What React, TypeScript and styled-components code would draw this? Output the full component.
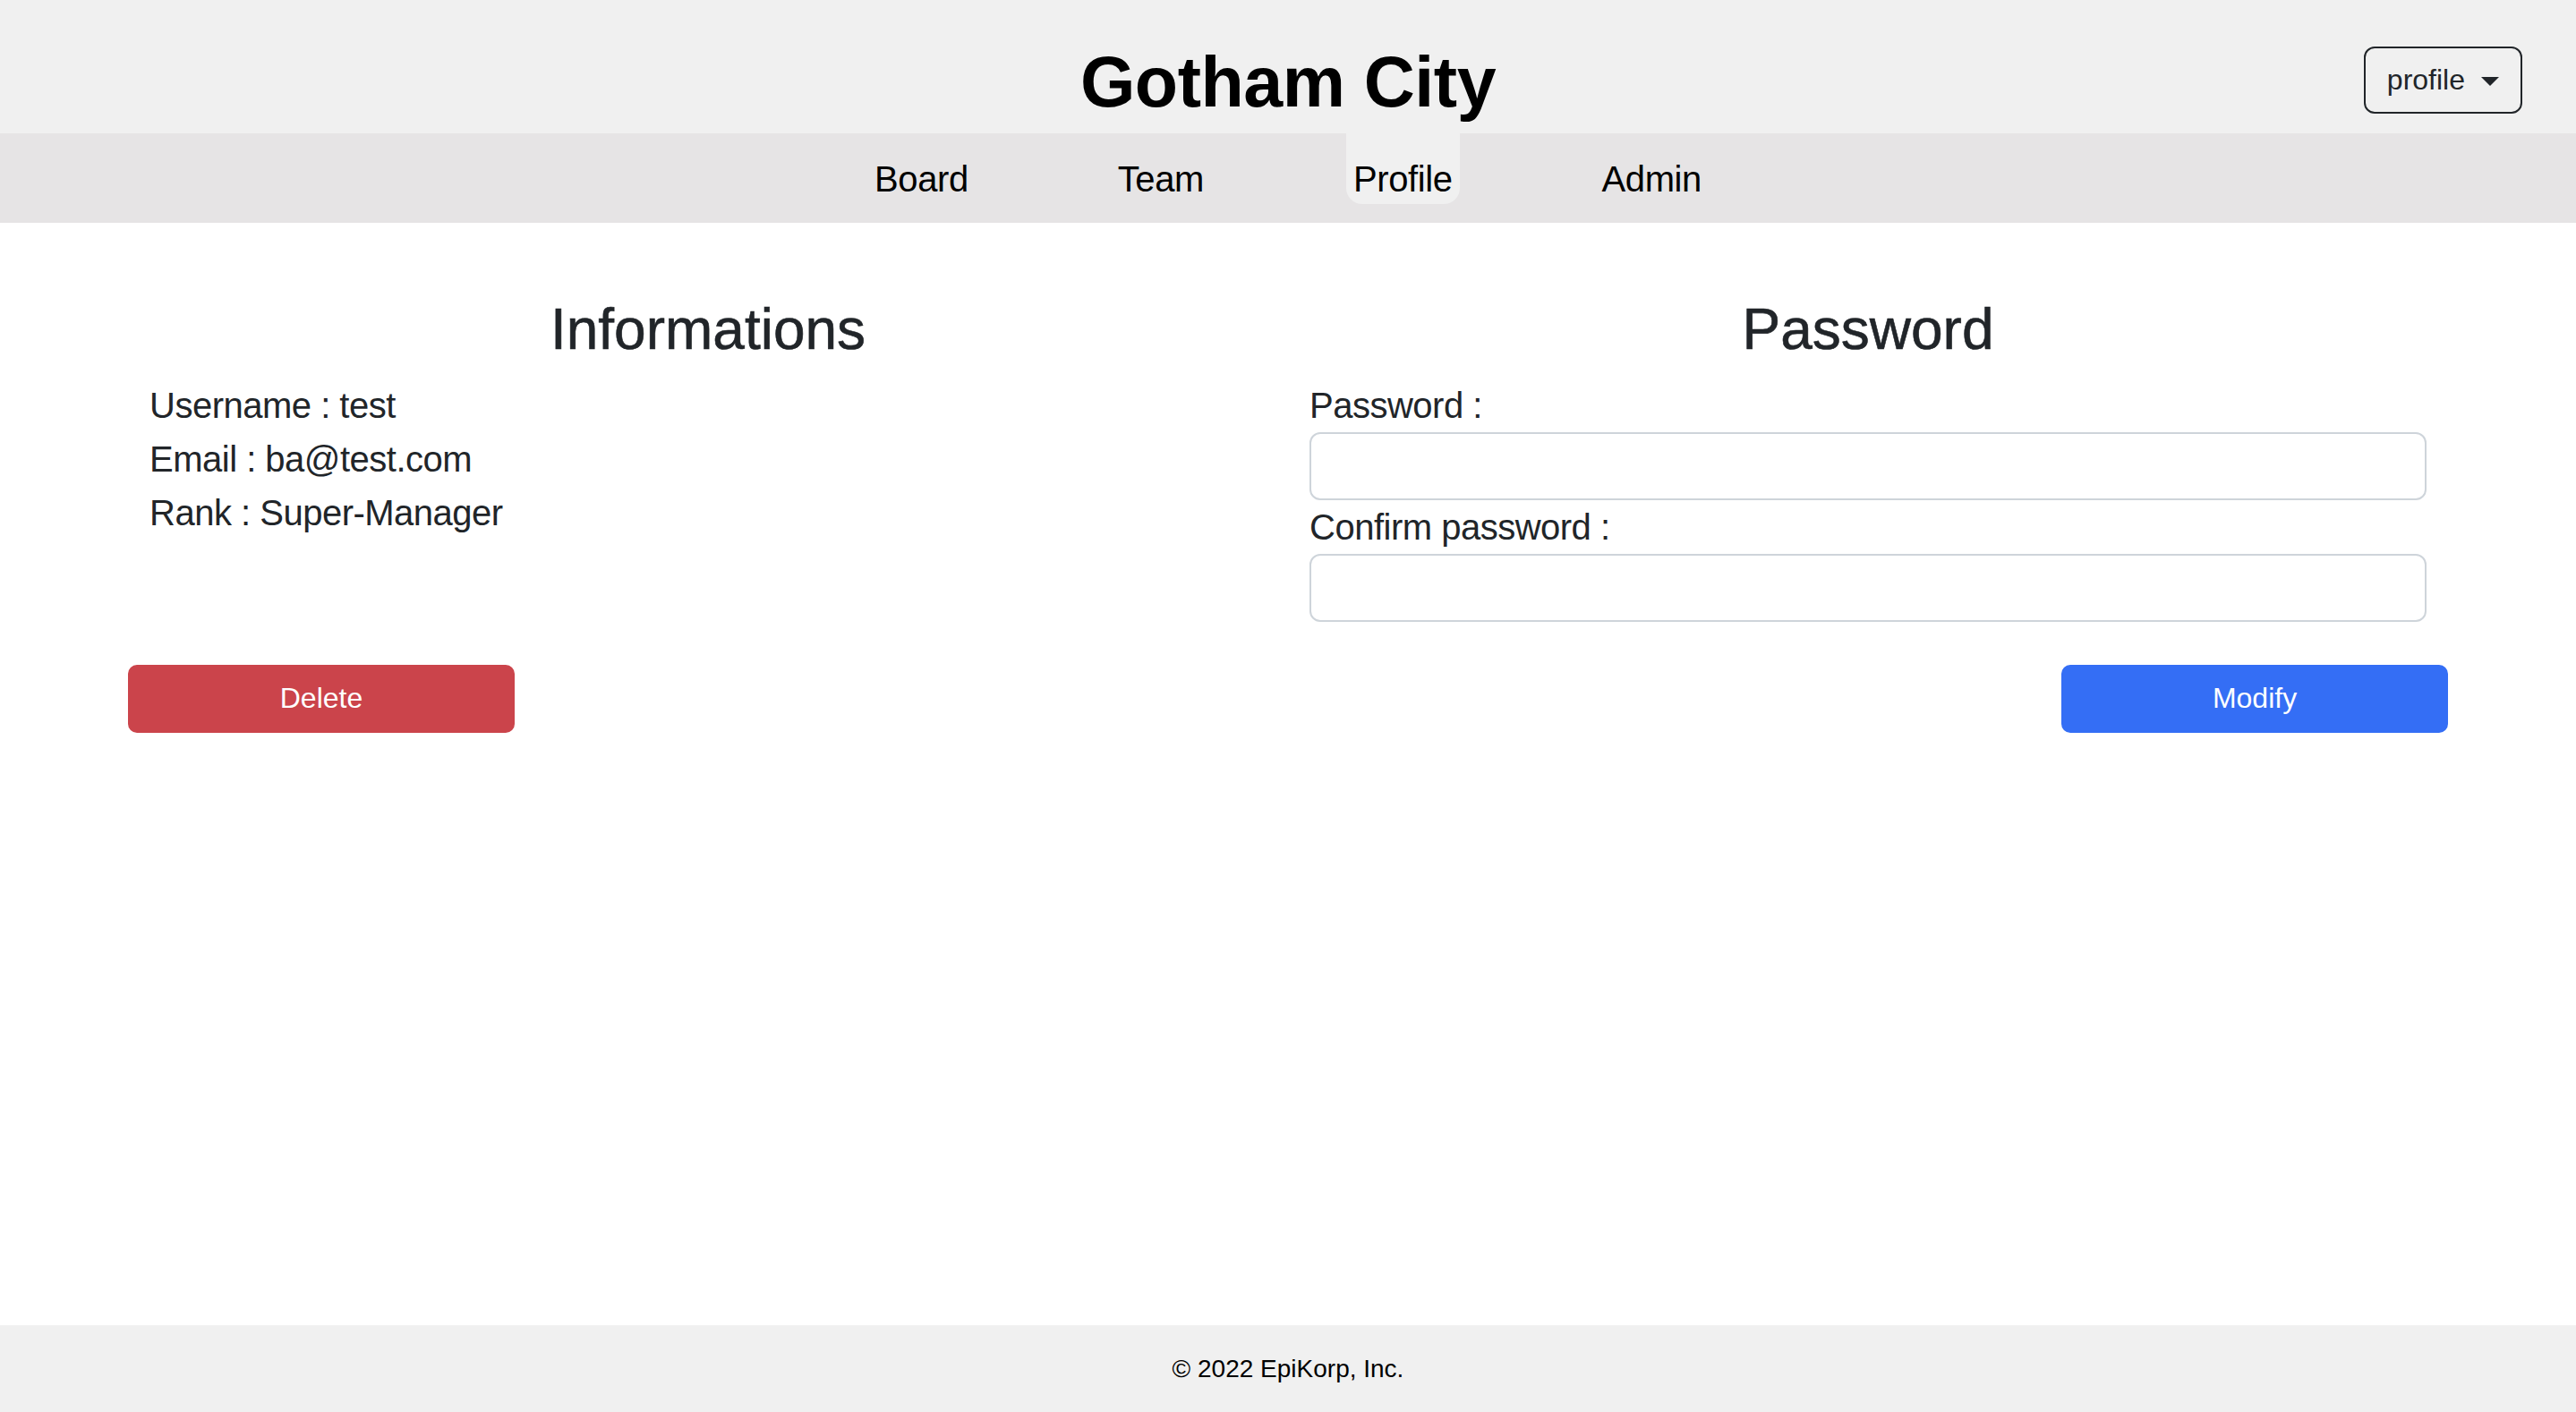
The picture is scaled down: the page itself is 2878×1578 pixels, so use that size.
import React from "react";
import styled, { createGlobalStyle } from "styled-components";

const GlobalStyle = createGlobalStyle`
  * {
    box-sizing: border-box;
  }
  html, body {
    margin: 0;
    padding: 0;
  }
  body {
    font-family: "Liberation Sans", Arial, Helvetica, sans-serif;
    color: #212529;
    background: #ffffff;
  }
`;

const navLinks = ["Board", "Team", "Profile", "Admin"];

export default function App() {
  return (
    <>
      <GlobalStyle />
      <Page>
        <Header>
          <span />
          <Title>Gotham City</Title>
          <ProfileButton type="button">
            profile
            <Caret />
          </ProfileButton>
        </Header>

        <Nav>
          {navLinks.map((label) => (
            <NavLink key={label} href="#" active={label === "Profile"}>
              {label}
            </NavLink>
          ))}
        </Nav>

        <Main>
          <Columns>
            <InfoColumn>
              <SectionTitle>Informations</SectionTitle>
              <InfoLine>Username : test</InfoLine>
              <InfoLine>Email : ba@test.com</InfoLine>
              <InfoLine>Rank : Super-Manager</InfoLine>
            </InfoColumn>

            <PasswordColumn>
              <SectionTitle>Password</SectionTitle>
              <Label htmlFor="password">Password :</Label>
              <Input id="password" type="password" />
              <Label htmlFor="confirm">Confirm password :</Label>
              <Input id="confirm" type="password" />
            </PasswordColumn>
          </Columns>

          <Actions>
            <ActionButton type="button" tone="danger">
              Delete
            </ActionButton>
            <ActionButton type="button" tone="primary">
              Modify
            </ActionButton>
          </Actions>
        </Main>

        <Footer>© 2022 EpiKorp, Inc.</Footer>
      </Page>
    </>
  );
}

const Page = styled.div`
  min-height: 100vh;
  display: flex;
  flex-direction: column;
`;

const Header = styled.header`
  height: 149px;
  background: #f0f0f0;
  display: grid;
  grid-template-columns: 1fr auto 1fr;
  align-items: start;
`;

const Title = styled.h1`
  margin: 0;
  padding-top: 45px;
  font-size: 79px;
  line-height: 1.2;
  font-weight: 700;
  letter-spacing: -0.5px;
  color: #000000;
`;

const ProfileButton = styled.button`
  justify-self: end;
  margin: 52px 60px 0 0;
  height: 75px;
  padding: 0 24px;
  display: flex;
  align-items: center;
  gap: 18px;
  background: transparent;
  border: 2px solid #212529;
  border-radius: 12px;
  font-family: "Liberation Sans", Arial, sans-serif;
  font-size: 32px;
  color: #212529;
`;

const Caret = styled.span`
  width: 0;
  height: 0;
  border-left: 10px solid transparent;
  border-right: 10px solid transparent;
  border-top: 10px solid #212529;
  margin-top: 2px;
`;

const Nav = styled.nav`
  height: 100px;
  background: #e6e4e5;
  display: flex;
  justify-content: center;
  align-items: flex-start;
  gap: 151px;
`;

const NavLink = styled.a<{ active?: boolean }>`
  display: block;
  padding: 27px 8px 4px;
  font-size: 40px;
  line-height: 48px;
  letter-spacing: -0.4px;
  color: #000000;
  text-decoration: none;
  background: ${(p) => (p.active ? "#f0f0f0" : "transparent")};
  border-radius: 0 0 18px 18px;
`;

const Main = styled.main`
  flex: 1;
  width: 2640px;
  margin: 0 auto;
  padding: 81px 24px 0;
`;

const Columns = styled.div`
  display: grid;
  grid-template-columns: 1fr 1fr;
  column-gap: 48px;
  align-items: start;
`;

const InfoColumn = styled.section`
  padding-left: 24px;
`;

const PasswordColumn = styled.section`
  padding-right: 24px;
  display: flex;
  flex-direction: column;
`;

const SectionTitle = styled.h2`
  margin: 0 0 16px;
  font-size: 64px;
  line-height: 1.2;
  font-weight: 500;
  text-align: center;
  color: #212529;
  -webkit-text-stroke: 0.6px #212529;
`;

const InfoLine = styled.p`
  margin: 0;
  font-size: 40px;
  line-height: 60px;
  letter-spacing: -0.5px;
`;

const Label = styled.label`
  display: block;
  font-size: 40px;
  line-height: 60px;
  letter-spacing: -0.5px;
`;

const Input = styled.input`
  display: block;
  width: 100%;
  height: 76px;
  padding: 12px 24px;
  font-size: 32px;
  border: 2px solid #ced4da;
  border-radius: 12px;
  background: #ffffff;
  outline: none;
`;

const Actions = styled.div`
  margin-top: 48px;
  display: flex;
  justify-content: space-between;
`;

const ActionButton = styled.button<{ tone: "danger" | "primary" }>`
  width: 432px;
  height: 76px;
  border: none;
  border-radius: 10px;
  font-family: "Liberation Sans", Arial, sans-serif;
  font-size: 32px;
  color: #ffffff;
  background: ${(p) => (p.tone === "danger" ? "#cb444b" : "#346ef5")};
`;

const Footer = styled.footer`
  height: 97px;
  background: #f0f0f0;
  display: flex;
  align-items: center;
  justify-content: center;
  font-size: 28px;
  color: #000000;
`;
